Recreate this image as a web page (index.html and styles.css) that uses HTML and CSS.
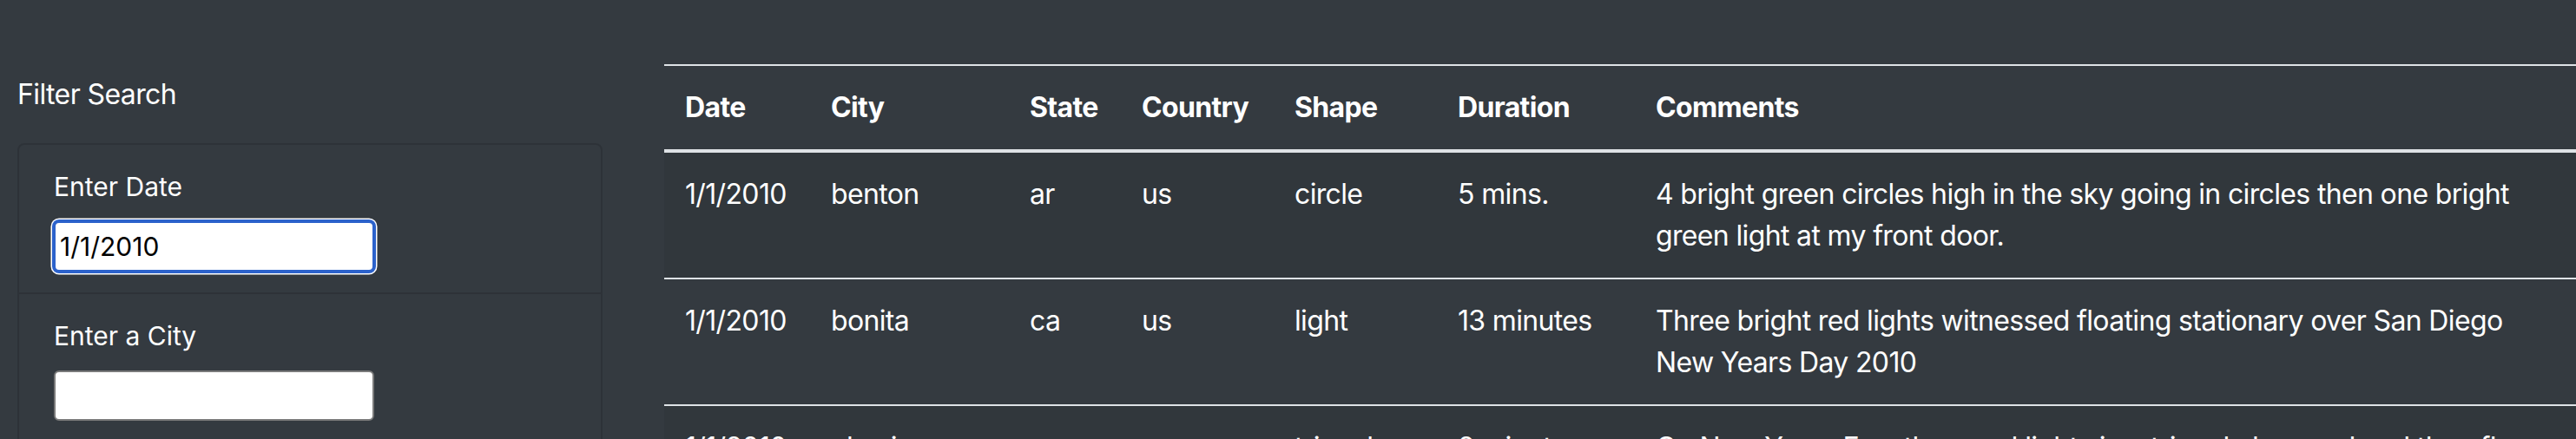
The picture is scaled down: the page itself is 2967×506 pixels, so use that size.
FILE: index.html
```html
<!DOCTYPE html>
<html lang="en">
<head>
<meta charset="utf-8">
<title>UFO Sightings</title>
<link rel="stylesheet" href="styles.css">
</head>
<body>
<div class="page">
  <aside class="sidebar">
    <h2 class="filter-title">Filter Search</h2>
    <form class="card">
      <div class="card-item">
        <label class="field-label" for="datetime">Enter Date</label>
        <input class="field-input is-focused" id="datetime" type="text" value="1/1/2010">
      </div>
      <div class="card-item">
        <label class="field-label" for="city">Enter a City</label>
        <input class="field-input" id="city" type="text">
      </div>
      <div class="card-item">
        <label class="field-label" for="state">Enter a State</label>
        <input class="field-input" id="state" type="text">
      </div>
    </form>
  </aside>
  <main class="results">
    <table class="ufo-table">
      <colgroup>
        <col class="c-date">
        <col class="c-city">
        <col class="c-state">
        <col class="c-country">
        <col class="c-shape">
        <col class="c-duration">
        <col class="c-comments">
      </colgroup>
      <thead>
        <tr>
          <th>Date</th>
          <th>City</th>
          <th>State</th>
          <th>Country</th>
          <th>Shape</th>
          <th>Duration</th>
          <th>Comments</th>
        </tr>
      </thead>
      <tbody>
        <tr>
          <td>1/1/2010</td>
          <td>benton</td>
          <td>ar</td>
          <td>us</td>
          <td>circle</td>
          <td>5 mins.</td>
          <td>4 bright green circles high in the sky going in circles then one bright green light at my front door.</td>
        </tr>
        <tr>
          <td>1/1/2010</td>
          <td>bonita</td>
          <td>ca</td>
          <td>us</td>
          <td>light</td>
          <td>13 minutes</td>
          <td>Three bright red lights witnessed floating stationary over San Diego New Years Day 2010</td>
        </tr>
        <tr>
          <td>1/1/2010</td>
          <td>el cajon</td>
          <td>ca</td>
          <td>us</td>
          <td>triangle</td>
          <td>2 minutes</td>
          <td>On New Years Eve, three red lights in a triangle hovered and then flew away</td>
        </tr>
      </tbody>
    </table>
  </main>
</div>
</body>
</html>
```
FILE: styles.css
```css
html, body {
  margin: 0;
  padding: 0;
  background: #343a40;
}

body {
  font-family: Inter, "Noto Sans", "Liberation Sans", sans-serif;
  color: #fff;
  font-size: 32px;
  line-height: 48px;
}

.page {
  display: flex;
  align-items: flex-start;
  gap: 71px;
  padding-left: 20px;
}

.sidebar {
  width: 674px;
  flex: none;
}

.filter-title {
  margin: 85px 0 32px;
  font-size: 32px;
  font-weight: 400;
  line-height: 48px;
  letter-spacing: -0.6px;
}

.card {
  margin: 0;
  border: 2px solid rgba(0, 0, 0, 0.125);
  border-radius: 8px;
  display: flex;
  flex-direction: column;
}

.card-item {
  padding: 24px 40px;
  display: flex;
  flex-direction: column;
  align-items: flex-start;
}

.card-item + .card-item {
  border-top: 2px solid rgba(0, 0, 0, 0.125);
}

.field-label {
  font-size: 30px;
  line-height: 48px;
  margin-bottom: 16px;
}

.field-input {
  box-sizing: border-box;
  width: 369px;
  height: 58px;
  margin: 0;
  padding: 0 5px;
  border: 2px solid #7a7a7a;
  border-radius: 6px;
  background: #fff;
  color: #000;
  font-family: Inter, "Noto Sans", "Liberation Sans", sans-serif;
  font-size: 30px;
  outline: none;
}

.field-input.is-focused {
  border-color: #2c62cb;
  box-shadow: 0 0 0 2px #2c62cb, 0 0 0 3.5px #fff;
}

.results {
  flex: 1;
  min-width: 0;
}

.ufo-table {
  width: 100%;
  margin-top: 74px;
  border-collapse: collapse;
  table-layout: fixed;
  color: #fff;
  letter-spacing: -0.65px;
}

.c-date { width: 168px; }
.c-city { width: 229px; }
.c-state { width: 129px; }
.c-country { width: 176px; }
.c-shape { width: 188px; }
.c-duration { width: 228px; }

.ufo-table th,
.ufo-table td {
  padding: 24px;
  text-align: left;
  vertical-align: top;
  border-top: 2px solid #dee2e6;
}

.ufo-table th {
  font-weight: 700;
}

.ufo-table thead th {
  border-bottom: 4px solid #dee2e6;
}

.ufo-table thead + tbody tr:first-child td {
  border-top: 0;
}

.ufo-table tbody tr:nth-child(odd) {
  background: rgba(0, 0, 0, 0.05);
}
```
